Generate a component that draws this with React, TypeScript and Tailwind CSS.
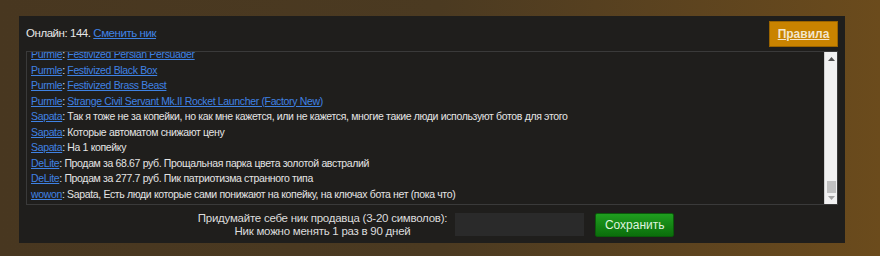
import React from "react";

const link = "text-[#3f82e4] underline";

type Msg = { name: string; text?: string; item?: string };

const msgs: Msg[] = [
  { name: "Purmle", item: "Festivized Persian Persuader" },
  { name: "Purmle", item: "Festivized Black Box" },
  { name: "Purmle", item: "Festivized Brass Beast" },
  { name: "Purmle", item: "Strange Civil Servant Mk.II Rocket Launcher (Factory New)" },
  { name: "Sapata", text: "Так я тоже не за копейки, но как мне кажется, или не кажется, многие такие люди используют ботов для этого" },
  { name: "Sapata", text: "Которые автоматом снижают цену" },
  { name: "Sapata", text: "На 1 копейку" },
  { name: "DeLite", text: "Продам за 68.67 руб. Прощальная парка цвета золотой австралий" },
  { name: "DeLite", text: "Продам за 277.7 руб. Пик патриотизма странного типа" },
  { name: "wowon", text: "Sapata, Есть люди которые сами понижают на копейку, на ключах бота нет (пока что)" },
];

export default function App() {
  return (
    <div
      className="w-[880px] h-[256px] bg-gradient-to-r from-[#483720] via-[#4b3a21] to-[#6b4b1c] pt-4 pl-[19px] overflow-hidden"
      style={{ fontFamily: '"Liberation Sans", Arial, sans-serif' }}
    >
      <div className="w-[826px] h-[227px] bg-[#1f1e1c] px-[7px] pt-[5px] flex flex-col">
        <div className="h-[30px] flex items-start justify-between">
          <div className="h-[26px] flex items-center text-[11.5px] tracking-[-0.45px] text-[#e6e6e6]">
            <span>Онлайн: 144.&nbsp;</span>
            <span className={link}>Сменить ник</span>
          </div>
          <div className="w-[69px] h-[26px] bg-[#c98300] border border-[#9a6400] flex items-center justify-center text-[12px] font-bold text-[#f3e6cc] underline">
            Правила
          </div>
        </div>
        <div className="h-[154px] border border-[#3a3a3a] flex">
          <div className="flex-1 overflow-hidden flex flex-col justify-end pl-[4px] pb-[2px]">
            {msgs.map((m, i) => (
              <div key={i} className="h-[15.5px] leading-[15.5px] text-[10.5px] tracking-[-0.35px] text-[#e4e4e4] whitespace-nowrap shrink-0">
                <span className={link}>{m.name}</span>
                <span>: </span>
                {m.item ? <span className={link}>{m.item}</span> : <span>{m.text}</span>}
              </div>
            ))}
          </div>
          <div className="w-[13px] bg-[#f1f1f1] border-l border-[#cfcfcf] flex flex-col items-center">
            <svg width="7" height="4" viewBox="0 0 7 4" className="mt-[5px]">
              <polygon points="0,4 7,4 3.5,0" fill="#505050" />
            </svg>
            <div className="flex-1" />
            <div className="w-[9px] h-[12px] bg-[#c1c1c1]" />
            <svg width="7" height="4" viewBox="0 0 7 4" className="mt-[3px] mb-[4px]">
              <polygon points="0,0 7,0 3.5,4" fill="#a3a3a3" />
            </svg>
          </div>
        </div>
        <div className="flex-1 flex items-center justify-center gap-[8px] pl-[8px] pt-[1px]">
          <div className="text-center text-[11.5px] tracking-[-0.25px] leading-[13px] text-[#dcdcdc]">
            <div>Придумайте себе ник продавца (3-20 символов):</div>
            <div>Ник можно менять 1 раз в 90 дней</div>
          </div>
          <div className="w-[129px] h-[23px] bg-[#2a2a2a]" />
          <div className="ml-[3px] w-[79px] h-[24px] rounded-[2px] bg-gradient-to-b from-[#1f9f1f] to-[#0b6e0b] border border-[#0a5a0a] flex items-center justify-center text-[12px] text-[#dff3df]">
            Сохранить
          </div>
        </div>
      </div>
    </div>
  );
}
